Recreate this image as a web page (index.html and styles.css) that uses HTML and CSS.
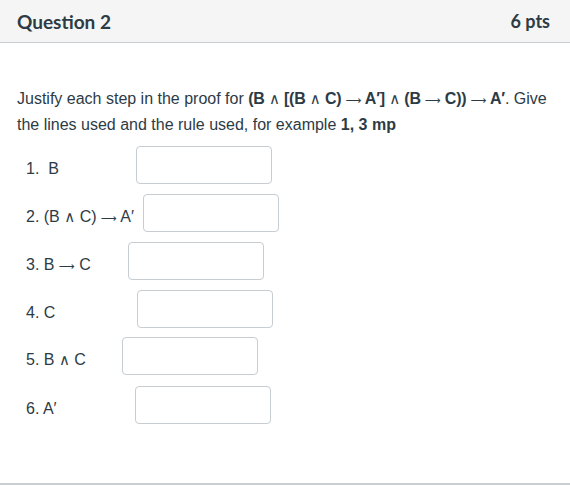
FILE: index.html
```html
<!DOCTYPE html>
<html lang="en">
<head>
<meta charset="utf-8">
<title>Question 2</title>
<link rel="stylesheet" href="styles.css">
</head>
<body>
<div class="question">
  <div class="header">
    <span class="title">Question 2</span>
    <span class="pts">6 pts</span>
  </div>
  <div class="content">
    <p class="prompt">Justify each step in the proof for <b class="formula">(B <span class="and">∧</span> [(B <span class="and">∧</span> C) <span class="arr">⟶</span> A′] <span class="and">∧</span> (B <span class="arr">⟶</span> C)) <span class="arr">⟶</span> A′</b>. Give the lines used and the rule used, for example <b>1, 3 mp</b></p>
    <div class="rows">
      <div class="row r1"><span class="label">1.&nbsp; B</span><input class="box" type="text"></div>
      <div class="row r2"><span class="label">2. (B <span class="and">∧</span> C) <span class="arr">⟶</span> A′</span><input class="box" type="text"></div>
      <div class="row r3"><span class="label">3. B <span class="arr">⟶</span> C</span><input class="box" type="text"></div>
      <div class="row r4"><span class="label">4. C</span><input class="box" type="text"></div>
      <div class="row r5"><span class="label">5. B <span class="and">∧</span> C</span><input class="box" type="text"></div>
      <div class="row r6"><span class="label">6. A′</span><input class="box" type="text"></div>
    </div>
  </div>
</div>
</body>
</html>
```
FILE: styles.css
```css
html, body {
  margin: 0;
  padding: 0;
  background: #ffffff;
}
.question {
  width: 570px;
  height: 485px;
  box-sizing: border-box;
  border-bottom: 2px solid #c7cdd1;
  color: #2d3b45;
}
.header {
  height: 43px;
  box-sizing: border-box;
  background: #f5f5f5;
  border-bottom: 1px solid #c7cdd1;
  display: flex;
  align-items: center;
  justify-content: space-between;
  padding: 0 20px 0 17px;
  font-family: Lato, "Liberation Sans", sans-serif;
  color: #2d3b45;
}
.title {
  font-size: 19px;
  font-weight: 700;
}
.pts {
  font-size: 18px;
  font-weight: 700;
}
.content {
  padding: 43px 8px 0 17px;
  font-family: "Liberation Sans", Arial, "DejaVu Sans", sans-serif;
  font-size: 16px;
}
.prompt {
  margin: 0;
  line-height: 26px;
}
.formula {
  letter-spacing: -0.2px;
}
.and {
  font-family: "DejaVu Sans", sans-serif;
  font-weight: 400;
  font-size: 15px;
  line-height: 1;
}
.arr {
  font-family: "DejaVu Sans", sans-serif;
  font-weight: 400;
  font-size: 11px;
  line-height: 1;
}
.rows {
  margin-top: 8px;
  padding-left: 9px;
  display: flex;
  flex-direction: column;
  gap: 10px;
}
.row {
  display: flex;
  align-items: center;
  height: 38px;
}
.label {
  padding-top: 8px;
  white-space: nowrap;
}
.box {
  width: 136px;
  height: 38px;
  box-sizing: border-box;
  border: 1px solid #c7cdd1;
  border-radius: 4px;
  background: #fff;
  margin: 0;
  padding: 0;
}
.r1 .label { width: 110px; }
.r2 .label { width: 117px; }
.r3 .label { width: 102px; }
.r4 .label { width: 111px; }
.r5 .label { width: 96px; }
.r6 .label { width: 109px; }
.r5 { margin-top: -1px; }
.r6 { margin-top: 1px; }
```
